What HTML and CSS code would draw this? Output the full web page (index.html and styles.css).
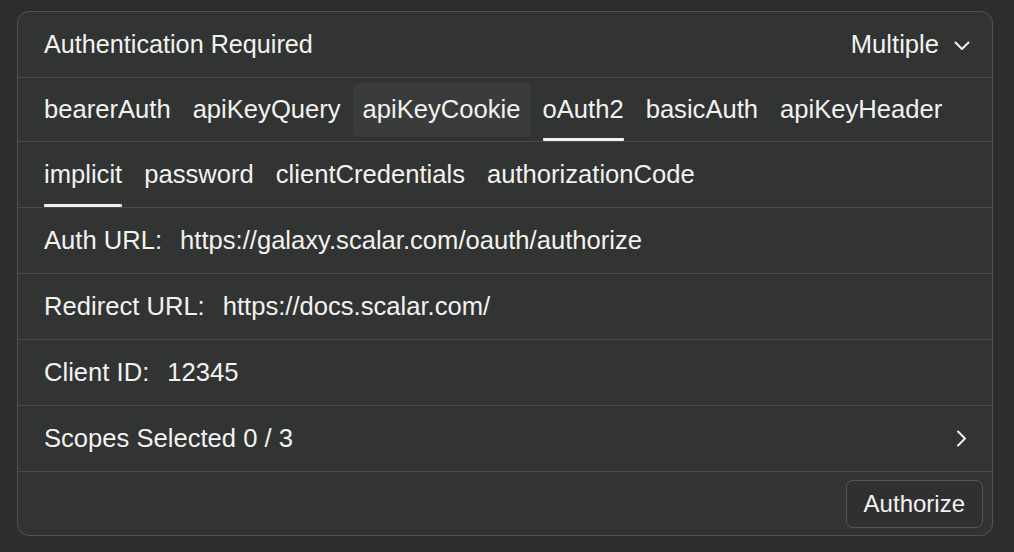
FILE: index.html
```html
<!DOCTYPE html>
<html lang="en">
<head>
<meta charset="utf-8">
<title>Authentication</title>
<link rel="stylesheet" href="styles.css">
</head>
<body>
<div class="card">
  <div class="row header">
    <div class="title">Authentication Required</div>
    <button class="select">Multiple
      <svg class="chev-down" width="16" height="10" viewBox="0 0 16 10"><path d="M1.5 1.5 L8 8 L14.5 1.5" fill="none" stroke="currentColor" stroke-width="2" stroke-linecap="round" stroke-linejoin="round"/></svg>
    </button>
  </div>
  <div class="row tabs">
    <button class="tab">bearerAuth</button>
    <button class="tab">apiKeyQuery</button>
    <button class="tab hover">apiKeyCookie</button>
    <button class="tab active">oAuth2</button>
    <button class="tab">basicAuth</button>
    <button class="tab">apiKeyHeader</button>
  </div>
  <div class="row tabs sub">
    <button class="tab active">implicit</button>
    <button class="tab">password</button>
    <button class="tab">clientCredentials</button>
    <button class="tab">authorizationCode</button>
  </div>
  <div class="row field">
    <span class="label">Auth URL:</span>
    <span class="value">https://galaxy.scalar.com/oauth/authorize</span>
  </div>
  <div class="row field">
    <span class="label">Redirect URL:</span>
    <span class="value">https://docs.scalar.com/</span>
  </div>
  <div class="row field">
    <span class="label">Client ID:</span>
    <span class="value">12345</span>
  </div>
  <div class="row field scopes">
    <span class="label">Scopes Selected 0 / 3</span>
    <svg class="chev-right" width="11" height="17" viewBox="0 0 11 17"><path d="M2 1.5 L9 8.5 L2 15.5" fill="none" stroke="currentColor" stroke-width="2" stroke-linecap="round" stroke-linejoin="round"/></svg>
  </div>
  <div class="row footer">
    <button class="authorize">Authorize</button>
  </div>
</div>
</body>
</html>
```

FILE: styles.css
```css
* { box-sizing: border-box; }
html, body {
  margin: 0;
  padding: 0;
  background: #2c2d2d;
}
body {
  font-family: "Liberation Sans", Arial, sans-serif;
  font-size: 25.6px;
  color: #f2f2f0;
  padding: 11px 0 0 17px;
}
button {
  font: inherit;
  color: inherit;
  background: none;
  border: none;
  padding: 0;
  cursor: pointer;
}
.card {
  width: 976px;
  border: 1px solid #525353;
  border-radius: 12px;
  background: #323333;
  overflow: hidden;
}
.row {
  display: flex;
  align-items: center;
  height: 66px;
  border-top: 1px solid #4a4b4b;
  padding: 0 25px 0 26px;
}
.row:first-child { border-top: none; }
.header {
  height: 65px;
  justify-content: space-between;
  padding-right: 22px;
}
.title { font-size: 25.2px; }
.select {
  display: flex;
  align-items: center;
  gap: 15px;
}
.chev-down { margin-top: 2px; }
.tabs {
  height: 64px;
  padding-left: 16px;
  gap: 2px;
}
.tabs.sub { height: 66px; }
.tab {
  position: relative;
  height: 54px;
  padding: 0 10px;
  border-radius: 6px;
  display: flex;
  align-items: center;
}
.tab.hover { background: #3a3b3b; }
.tab.active::after {
  content: "";
  position: absolute;
  left: 10px;
  right: 10px;
  bottom: -4px;
  height: 3px;
  border-radius: 1px;
  background: #f2f2f0;
}
.tabs.sub .tab.active::after { bottom: -5px; }
.field { gap: 18px; }
.scopes { justify-content: space-between; }
.footer {
  height: 64px;
  justify-content: flex-end;
  padding: 0 9px;
}
.authorize {
  height: 48px;
  padding: 0 17px;
  border: 1px solid #575858;
  border-radius: 7px;
  background: #2f3030;
  font-size: 24px;
}
```
